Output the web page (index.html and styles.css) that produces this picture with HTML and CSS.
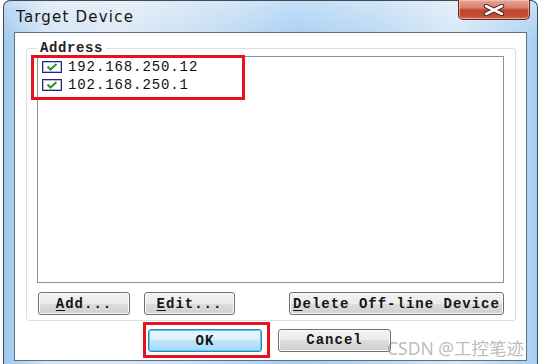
FILE: index.html
```html
<!DOCTYPE html>
<html lang="en">
<head>
    <meta charset="UTF-8">
    <title>Target Device</title>
    <link rel="stylesheet" href="styles.css">
</head>
<body>
    <div class="window">
        <div class="titlebar">
            <span class="title">Target Device</span>
            <button class="close-btn" aria-label="Close">
                <svg width="24" height="12" viewBox="0 0 24 12">
                    <path d="M4 2 L20 10 M20 2 L4 10" stroke="#3b1a14" stroke-width="4.4" stroke-linecap="round"/>
                    <path d="M4 2 L20 10 M20 2 L4 10" stroke="#ffffff" stroke-width="2.6" stroke-linecap="round"/>
                </svg>
            </button>
        </div>
        <div class="client">
            <fieldset class="group">
                <legend>Address</legend>
                <div class="listbox">
                    <div class="item">
                        <span class="check">
                            <svg width="12" height="8" viewBox="0 0 12 8"><path d="M1.5 3.5 L4.5 6.5 L10.5 1" fill="none" stroke="#1f9a2a" stroke-width="2"/></svg>
                        </span>
                        192.168.250.12
                    </div>
                    <div class="item">
                        <span class="check">
                            <svg width="12" height="8" viewBox="0 0 12 8"><path d="M1.5 3.5 L4.5 6.5 L10.5 1" fill="none" stroke="#1f9a2a" stroke-width="2"/></svg>
                        </span>
                        102.168.250.1
                    </div>
                    <div class="mark mark-list"></div>
                </div>
                <div class="group-buttons">
                    <button class="btn btn-add"><u>A</u>dd...</button>
                    <button class="btn btn-edit"><u>E</u>dit...</button>
                    <button class="btn btn-delete"><u>D</u>elete Off-line Device</button>
                </div>
            </fieldset>
            <div class="dialog-buttons">
                <div class="mark mark-ok">
                    <button class="btn btn-default">OK</button>
                </div>
                <button class="btn btn-cancel">Cancel</button>
            </div>
            <div class="watermark">CSDN @工控笔迹</div>
        </div>
    </div>
</body>
</html>
```

FILE: styles.css
```css
html, body {
    margin: 0;
    height: 364px;
    overflow: hidden;
    background: #ffffff;
}

body {
    padding: 0 1px 0 3px;
    font-family: "Liberation Mono", "DejaVu Sans Mono", monospace;
}

.window {
    width: 535px;
    height: 364px;
    box-sizing: border-box;
    border: 1px solid #3d4a58;
    border-bottom: none;
    border-radius: 7px 7px 0 0;
    background:
        linear-gradient(to bottom, rgba(255, 255, 255, 0.35), rgba(255, 255, 255, 0) 40px),
        linear-gradient(to right, #9fc8ef 0%, #d3e4f4 8%, #dbe8f5 22%, #c2dbf3 40%, #a6cef3 55%, #b9d7f3 70%, #d8e8f6 85%, #a8cff2 100%);
    display: flex;
    flex-direction: column;
}

.titlebar {
    height: 31px;
    display: flex;
    align-items: center;
    padding: 0 7px 0 12px;
    flex-shrink: 0;
}

.title {
    font-family: "DejaVu Sans", "Liberation Sans", sans-serif;
    font-size: 15px;
    letter-spacing: 1.2px;
    color: #151515;
    flex: 1;
    margin-top: 1px;
}

.close-btn {
    align-self: flex-start;
    margin-top: -1px;
    width: 72px;
    height: 20px;
    padding: 0;
    border: 1px solid #6b2a20;
    border-top: none;
    border-radius: 0 0 5px 5px;
    background: linear-gradient(to bottom, #e6a899 0%, #d8806c 40%, #c0432d 55%, #c34c36 85%, #d77c62 100%);
    box-shadow: inset 0 0 0 1px rgba(255, 210, 200, 0.5);
    display: flex;
    align-items: center;
    justify-content: center;
}

.client {
    position: relative;
    margin: 0 10px;
    height: 329px;
    box-sizing: border-box;
    border: 1px solid #5f7085;
    background: #ffffff;
    flex-shrink: 0;
}

.group {
    margin: 8px 10px 0 11px;
    padding: 1px 11px 5px 10px;
    border: 1px solid #d5dfe5;
    border-radius: 3px;
    min-width: 0;
}

.group legend {
    padding: 0 3px;
    font-size: 14px;
    line-height: 14px;
    letter-spacing: 0.6px;
    font-weight: bold;
    color: #222222;
}

.listbox {
    position: relative;
    height: 227px;
    box-sizing: border-box;
    border: 1px solid #8c9099;
    padding: 0 4px;
}

.item {
    height: 18px;
    display: flex;
    align-items: center;
    gap: 6px;
    font-size: 14px;
    letter-spacing: 0.9px;
    color: #111111;
}

.item:first-child {
    margin-top: 1px;
}

.check {
    width: 20px;
    height: 12px;
    box-sizing: border-box;
    border: 1px solid #25258c;
    box-shadow: inset 0 0 0 1px #b8b8dc;
    background: #ffffff;
    display: flex;
    align-items: center;
    justify-content: center;
    flex-shrink: 0;
}

.mark {
    border: 3px solid #e8121c;
    box-sizing: border-box;
}

.mark-list {
    position: absolute;
    left: -7px;
    top: -2px;
    width: 214px;
    height: 45px;
}

.group-buttons {
    display: flex;
    margin-top: 9px;
}

.btn {
    height: 23px;
    padding: 0;
    border: 1px solid #707070;
    border-radius: 3px;
    background: linear-gradient(to bottom, #f2f2f2 0%, #ebebeb 50%, #dddddd 50%, #cfcfcf 100%);
    box-shadow: inset 0 0 0 1px #fbfbfb;
    font-family: "Liberation Mono", "DejaVu Sans Mono", monospace;
    font-size: 14px;
    font-weight: bold;
    letter-spacing: 1px;
    color: #151515;
}

.btn u {
    text-underline-offset: 2px;
}

.btn-add {
    width: 92px;
    margin-left: 1px;
}

.btn-edit {
    width: 91px;
    margin-left: 14px;
}

.btn-delete {
    width: 215px;
    margin-left: auto;
}

.dialog-buttons {
    display: flex;
    align-items: center;
    margin-top: 1px;
}

.mark-ok {
    margin-left: 128px;
    padding: 4px 5px 3px 2px;
}

.btn-default {
    display: block;
    width: 114px;
    border-color: #3c7fb1;
    background: linear-gradient(to bottom, #eaf6fd 0%, #d9f0fc 50%, #bee6fd 50%, #a7d9f5 100%);
    box-shadow: inset 0 0 0 1px #48d2f8;
}

.btn-cancel {
    width: 113px;
    margin-left: 8px;
}

.watermark {
    position: absolute;
    left: 372px;
    top: 305px;
    font-family: "Noto Sans", "Noto Sans CJK SC", sans-serif;
    font-size: 17.5px;
    line-height: 20px;
    color: rgba(130, 130, 130, 0.55);
    white-space: nowrap;
}
```
